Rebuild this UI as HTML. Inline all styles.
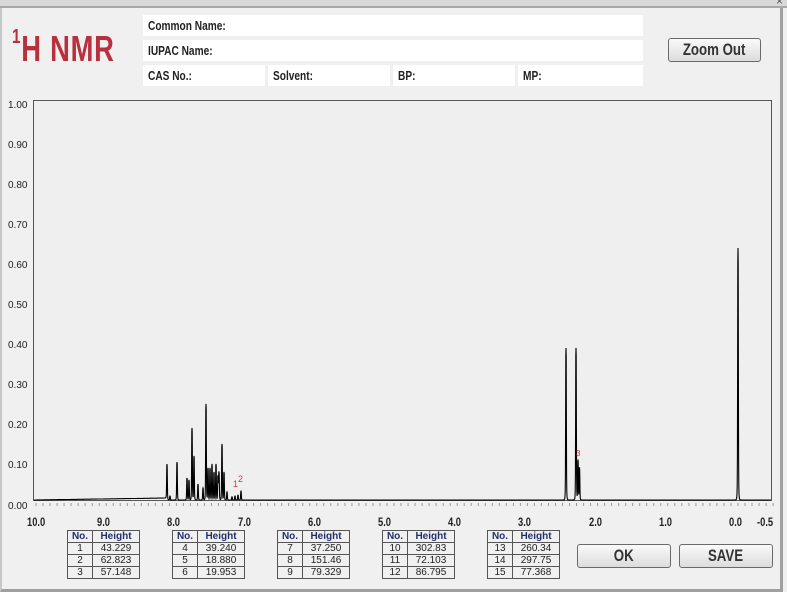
<!DOCTYPE html>
<html><head><meta charset="utf-8"><style>
*{margin:0;padding:0;box-sizing:border-box}
body{width:787px;height:592px;background:#f0f0f0;font-family:"Liberation Sans",sans-serif;position:relative;overflow:hidden}
.c{font-family:"Liberation Sans",sans-serif;font-weight:bold;display:inline-block;transform:scaleX(.78);transform-origin:left center;white-space:nowrap}
.top{position:absolute;left:0;top:0;width:787px;height:8px;background:#d8d8d8;border-bottom:2px solid #a8a8a8}
.win{position:absolute;left:0;top:8px;width:783px;height:584px;border-right:3px solid #a0a0a0;border-bottom:3px solid #a0a0a0;border-left:2px solid #c8c8c8}
.box{position:absolute;background:#fff;height:21px;font-size:13px;color:#222;padding-left:5px;line-height:21px}
.title{position:absolute;left:12px;top:28px;color:#b8303e;font-size:36px;font-weight:bold;font-family:"Liberation Sans",sans-serif;transform:scaleX(.76);transform-origin:left top;letter-spacing:1px}
.title sup{font-size:20px;position:relative;top:-2px;vertical-align:top}
.btn{position:absolute;border:1px solid #6a6a6a;border-radius:3px;background:linear-gradient(#fafafa,#dcdcdc);text-align:center;color:#333;font-size:17px;line-height:22px}
table{position:absolute;border-collapse:collapse;font-size:10px}
td{border:1px solid #555;height:12px;text-align:center;color:#222;padding:0;line-height:11px}
td.h{color:#22306a;font-weight:bold}
.yl{position:absolute;left:8px;font-size:10px;color:#222}
.xl{position:absolute;top:515px;font-size:12px;color:#222;font-weight:bold}
</style></head><body>
<div class="top"></div><div class="win"></div>
<div style="position:absolute;right:4px;top:-6px;font-size:12px;color:#555">×</div>
<div class="title"><sup>1</sup>H NMR</div>
<div class="box" style="left:143px;top:15px;width:500px"><span class="c">Common Name:</span></div>
<div class="box" style="left:143px;top:40px;width:500px"><span class="c">IUPAC Name:</span></div>
<div class="box" style="left:143px;top:65px;width:122px"><span class="c">CAS No.:</span></div>
<div class="box" style="left:268px;top:65px;width:122px"><span class="c">Solvent:</span></div>
<div class="box" style="left:393px;top:65px;width:122px"><span class="c">BP:</span></div>
<div class="box" style="left:518px;top:65px;width:125px"><span class="c">MP:</span></div>
<div class="btn" style="left:668px;top:38px;width:93px;height:24px"><span class="c" style="transform-origin:center">Zoom Out</span></div>

<svg style="position:absolute;left:0;top:0" width="787" height="592">
<rect x="33.5" y="100.5" width="738" height="400" fill="#efefef" stroke="#555"/>
<path id="ticks" stroke="#999" stroke-width="1" fill="none"/>
<polyline id="sp" fill="none" stroke="#000" stroke-width="1.1"/>
<text x="233" y="487" font-size="9" fill="#e03050">1</text>
<text x="238" y="482" font-size="9" fill="#e03050">2</text>
<text x="576" y="456" font-size="8" fill="#e03050">3</text>
</svg>
<div class="yl" style="top:100px">1.00</div><div class="yl" style="top:140px">0.90</div><div class="yl" style="top:180px">0.80</div><div class="yl" style="top:220px">0.70</div><div class="yl" style="top:260px">0.60</div><div class="yl" style="top:300px">0.50</div><div class="yl" style="top:340px">0.40</div><div class="yl" style="top:380px">0.30</div><div class="yl" style="top:420px">0.20</div><div class="yl" style="top:460px">0.10</div><div class="yl" style="top:501px">0.00</div>
<div id="xls"></div>
<table style="left:67px;top:530px"><tr><td class="h" style="width:25px">No.</td><td class="h" style="width:47px">Height</td></tr><tr><td>1</td><td>43.229</td></tr><tr><td>2</td><td>62.823</td></tr><tr><td>3</td><td>57.148</td></tr></table>
<table style="left:172px;top:530px"><tr><td class="h" style="width:25px">No.</td><td class="h" style="width:47px">Height</td></tr><tr><td>4</td><td>39.240</td></tr><tr><td>5</td><td>18.880</td></tr><tr><td>6</td><td>19.953</td></tr></table>
<table style="left:277px;top:530px"><tr><td class="h" style="width:25px">No.</td><td class="h" style="width:47px">Height</td></tr><tr><td>7</td><td>37.250</td></tr><tr><td>8</td><td>151.46</td></tr><tr><td>9</td><td>79.329</td></tr></table>
<table style="left:382px;top:530px"><tr><td class="h" style="width:25px">No.</td><td class="h" style="width:47px">Height</td></tr><tr><td>10</td><td>302.83</td></tr><tr><td>11</td><td>72.103</td></tr><tr><td>12</td><td>86.795</td></tr></table>
<table style="left:487px;top:530px"><tr><td class="h" style="width:25px">No.</td><td class="h" style="width:47px">Height</td></tr><tr><td>13</td><td>260.34</td></tr><tr><td>14</td><td>297.75</td></tr><tr><td>15</td><td>77.368</td></tr></table>
<div class="btn" style="left:577px;top:544px;width:94px;height:24px"><span class="c" style="transform-origin:center">OK</span></div>
<div class="btn" style="left:679px;top:544px;width:94px;height:24px"><span class="c" style="transform-origin:center">SAVE</span></div>
<script>
var X=function(p){return 36+(10-p)*70.2};
var h='';
var labs=[10,9,8,7,6,5,4,3,2,1,0];
labs.forEach(function(p){h+='<div class="xl" style="left:'+(X(p)-9)+'px"><span class="c">'+p.toFixed(1)+'</span></div>';});
h+='<div class="xl" style="left:757px"><span class="c">-0.5</span></div>';
document.getElementById('xls').innerHTML=h;
var t='';for(var p=10;p>=-0.5;p-=0.1){var x=X(p);t+='M'+x.toFixed(1)+' 503v3';}
document.getElementById('ticks').setAttribute('d',t);
var px=[[167,.085],[170,.01],[177,.095],[187,.055],[189,.05],[192,.18],[194,.11],[198,.04],[203,.03],[206,.24],[208,.08],[210,.08],[212,.09],[214,.07],[216,.09],[218,.06],[219,.07],[222,.14],[224,.07],[227,.02],[232,.008],[235,.01],[238,.012],[241,.022],[566,.38],[576,.38],[578,.1],[579.5,.08],[738,.63]];
var pts=[];
for(var x=34;x<=771;x+=0.2){
 var base=x<167?500-(x-34)/133*2:500;var v=0;
 for(var i=0;i<px.length;i++){var d=(x-px[i][0])/0.4;v+=px[i][1]/(1+d*d*d*d);}
 var y=base-v*400;if(y<101)y=101;pts.push(x.toFixed(2)+','+y.toFixed(1));}
document.getElementById('sp').setAttribute('points',pts.join(' '));
</script>
</body></html>
